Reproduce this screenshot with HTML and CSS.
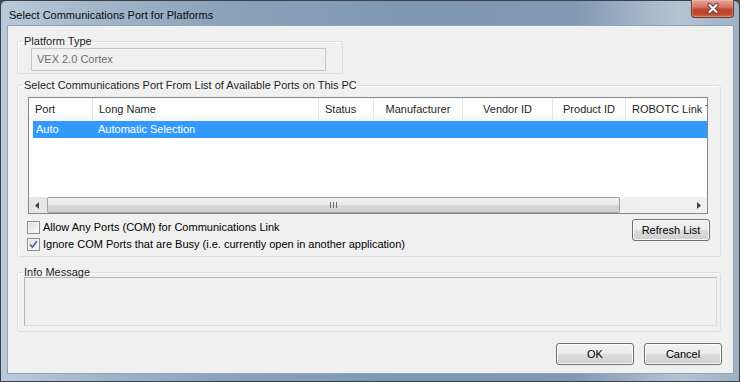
FILE: index.html
```html
<!DOCTYPE html>
<html lang="en">
<head>
  <meta charset="UTF-8" />
  <meta name="viewport" content="width=device-width, initial-scale=1.0"/>
  <title>Select Communications Port for Platforms</title>
  <link rel="stylesheet" href="styles.css">
</head>
<body>
  <div class="window">
    <div class="titlebar">
      <span class="title">Select Communications Port for Platforms</span>
      <button class="close" aria-label="Close">
        <svg width="14" height="11" viewBox="0 0 14 11">
          <path d="M3.5 2 L10.5 9 M10.5 2 L3.5 9" stroke="#5b3a36" stroke-width="4" stroke-linecap="round"/>
          <path d="M3.5 2 L10.5 9 M10.5 2 L3.5 9" stroke="#ffffff" stroke-width="2.2" stroke-linecap="round"/>
        </svg>
      </button>
    </div>

    <div class="client">
      <fieldset class="group group-platform">
        <legend>Platform Type</legend>
        <div class="group-body">
          <div class="textbox">VEX 2.0 Cortex</div>
        </div>
      </fieldset>

      <fieldset class="group group-ports">
        <legend>Select Communications Port From List of Available Ports on This PC</legend>
        <div class="group-body">
          <div class="listview">
            <div class="lv-header">
              <div class="col col-port">Port</div>
              <div class="col col-name">Long Name</div>
              <div class="col col-status">Status</div>
              <div class="col col-manuf center">Manufacturer</div>
              <div class="col col-vendor center">Vendor ID</div>
              <div class="col col-product center">Product ID</div>
              <div class="col col-link">ROBOTC Link T</div>
            </div>
            <div class="lv-body">
              <div class="lv-row selected">
                <div class="col col-port">Auto</div>
                <div class="col col-name">Automatic Selection</div>
              </div>
            </div>
            <div class="hscroll">
              <div class="arrow">
                <svg width="4" height="7" viewBox="0 0 4 7"><path d="M4 0 L0 3.5 L4 7 Z" fill="#444"/></svg>
              </div>
              <div class="track">
                <div class="thumb"><span class="grip"></span></div>
              </div>
              <div class="arrow">
                <svg width="4" height="7" viewBox="0 0 4 7"><path d="M0 0 L4 3.5 L0 7 Z" fill="#444"/></svg>
              </div>
            </div>
          </div>

          <div class="options">
            <div class="checks">
              <label class="check"><span class="box"></span>Allow Any Ports (COM) for Communications Link</label>
              <label class="check"><span class="box">
                <svg width="11" height="11" viewBox="0 0 11 11"><path d="M2.2 5.6 L4.4 8.2 L8.8 2.2" fill="none" stroke="#4a5c9c" stroke-width="1.6"/></svg>
              </span>Ignore COM Ports that are Busy (i.e. currently open in another application)</label>
            </div>
            <button class="btn btn-refresh">Refresh List</button>
          </div>
        </div>
      </fieldset>

      <fieldset class="group group-info">
        <legend>Info Message</legend>
        <div class="group-body">
          <div class="infobox"></div>
        </div>
      </fieldset>

      <div class="actions">
        <button class="btn">OK</button>
        <button class="btn">Cancel</button>
      </div>
    </div>
  </div>
</body>
</html>
```

FILE: styles.css
```css
* {
  box-sizing: border-box;
}

body {
  margin: 0;
  background-color: #4a4a4a;
  color: #000;
  font-family: Tahoma, "Liberation Sans", sans-serif;
  font-size: 11px;
}

.window {
  width: 740px;
  height: 382px;
  display: flex;
  flex-direction: column;
  padding: 0 5px 7px 6px;
  border: 1px solid #3b4048;
  border-radius: 6px 6px 0 0;
  background: linear-gradient(90deg, #b9cadb 0%, #9fb4c8 15%, #8aa2ba 30%, #7f98b2 55%, #8199b2 78%, #a9b9ca 88%, #b4c3d2 92%, #9fb2c5 100%);
}

.titlebar {
  height: 24px;
  display: flex;
  align-items: flex-start;
}

.title {
  padding: 7px 0 0 2px;
  font-family: "Liberation Sans", sans-serif;
  font-size: 11px;
  line-height: 14px;
  color: #0a0a0a;
}

.close {
  margin: -1px 0 0 auto;
  width: 43px;
  height: 18px;
  padding: 0;
  display: flex;
  align-items: center;
  justify-content: center;
  border: 1px solid #6a3a35;
  border-top: none;
  border-radius: 0 0 4px 4px;
  background: linear-gradient(#e2a497 0%, #d47564 40%, #c24630 55%, #c0432e 80%, #d06a50 100%);
  box-shadow: inset 0 0 0 1px rgba(255,255,255,0.25);
}

.client {
  flex: 1;
  display: flex;
  flex-direction: column;
  padding: 9px 11px 0 9px;
  border: 1px solid #8fa2b6;
  background-color: #f0f0f0;
}

.group {
  margin: 0;
  padding: 0;
  min-width: 0;
  border: 1px solid #d5dfe5;
  border-radius: 3px;
  box-shadow: inset 1px 1px 0 #fff;
}

.group legend {
  margin-left: 5px;
  padding: 0 1px;
  line-height: 13px;
  color: #1e1e1e;
}

.group-platform {
  width: 326px;
}

.group-platform .group-body {
  padding: 0 0 2px 13px;
}

.textbox {
  width: 295px;
  height: 23px;
  padding-left: 5px;
  line-height: 21px;
  border: 1px solid #c2c5ca;
  color: #6d6d6d;
  background-color: #f0f0f0;
}

.group-ports {
  margin: 5px 1px 0 0;
}

.group-ports .group-body {
  padding: 5px 12px 3px 10px;
}

.listview {
  height: 117px;
  display: flex;
  flex-direction: column;
  border: 1px solid #828790;
  background-color: #fff;
  overflow: hidden;
}

.lv-header,
.lv-row {
  display: flex;
  white-space: nowrap;
}

.lv-header {
  height: 23px;
  line-height: 23px;
  color: #1e1e1e;
  background: linear-gradient(#ffffff 0%, #ffffff 60%, #f5f6f7 100%);
}

.lv-header .col {
  border-right: 1px solid #e5e5e5;
}

.col {
  flex: none;
  padding-left: 6px;
  overflow: hidden;
}

.col.center {
  padding-left: 0;
  text-align: center;
}

.col-port { width: 64px; }
.col-name { width: 226px; }
.col-status { width: 55px; }
.col-manuf { width: 89px; }
.col-vendor { width: 90px; }
.col-product { width: 73px; }
.col-link { width: 82px; }

.lv-body {
  flex: 1;
}

.lv-row {
  height: 17px;
  line-height: 17px;
}

.lv-row.selected {
  margin-left: 4px;
  color: #fff;
  background-color: #3399ff;
}

.lv-row .col-port {
  width: 60px;
  padding-left: 3px;
}

.lv-row .col-name {
  padding-left: 5px;
}

.hscroll {
  height: 16px;
  display: flex;
  background: linear-gradient(90deg, #e6e6e6, #f0f0f0);
  background-color: #ececec;
}

.arrow {
  width: 16px;
  display: flex;
  align-items: center;
  justify-content: center;
}

.track {
  flex: 1;
  padding: 0 1px;
  display: flex;
}

.thumb {
  width: 573px;
  margin-left: 1px;
  display: flex;
  align-items: center;
  justify-content: center;
  border: 1px solid #a0a0a0;
  border-radius: 2px;
  background: linear-gradient(#f4f4f4 0%, #e8e8e8 50%, #d8d8d8 51%, #d0d0d0 100%);
}

.grip {
  width: 7px;
  height: 6px;
  background: repeating-linear-gradient(90deg, #6a6a6a 0, #6a6a6a 1px, transparent 1px, transparent 3px);
}

.options {
  margin-top: 5px;
  display: flex;
  align-items: flex-start;
}

.checks {
  flex: 1;
  margin-left: -1px;
}

.check {
  height: 17px;
  display: flex;
  align-items: center;
  gap: 3px;
  line-height: 17px;
}

.box {
  width: 13px;
  height: 13px;
  display: flex;
  align-items: center;
  justify-content: center;
  border: 1px solid #8f8f8f;
  background: linear-gradient(135deg, #dcdcdc, #fbfbfb);
  box-shadow: inset 0 0 0 1px #f4f4f4;
}

.btn {
  width: 78px;
  height: 22px;
  padding: 0;
  border: 1px solid #707070;
  border-radius: 3px;
  color: #000;
  font-family: inherit;
  font-size: 11px;
  background: linear-gradient(#f2f2f2 0%, #ebebeb 50%, #dddddd 51%, #cfcfcf 100%);
  box-shadow: inset 0 0 0 1px #fcfcfc;
}

.btn-refresh {
  margin-right: -2px;
}

.group-info {
  margin: 9px 1px 0 0;
}

.group-info .group-body {
  padding: 0 3px 5px 6px;
}

.infobox {
  height: 49px;
  margin-top: -2px;
  border: 1px solid #b4b4b4;
  border-right-color: #dcdcdc;
  border-bottom-color: #dcdcdc;
  background-color: #f0f0f0;
}

.actions {
  margin-top: 11px;
  display: flex;
  justify-content: flex-end;
  gap: 10px;
}
```
